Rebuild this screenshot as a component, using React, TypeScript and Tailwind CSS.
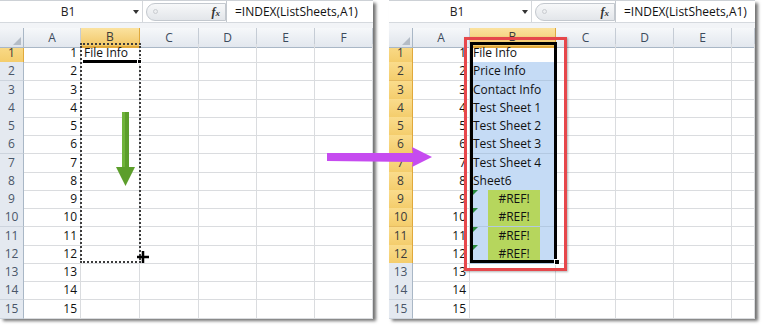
import React from 'react';

type Cell = { text?: string; kind?: 'plain' | 'active' | 'sel' | 'ref' };

interface PanelProps {
  cols: string;
  letters: string[];
  selectedRows: number;
  bCells: Cell[];
  children?: React.ReactNode;
}

const rows = Array.from({ length: 15 }, (_, i) => i + 1);

function FormulaBar() {
  return (
    <div className="h-[22px] flex items-stretch border-t border-[#cdd1d6] bg-white">
      <div className="w-[143px] flex items-center border-r border-[#d4d7db]">
        <span className="flex-1 text-center text-[12px] text-[#222] pl-[3px]">B1</span>
        <span className="w-0 h-0 border-l-[3px] border-r-[3px] border-t-[4px] border-l-transparent border-r-transparent border-t-[#333] mr-[3px]" />
      </div>
      <div className="w-[80px] self-center h-[18px] ml-[3px] rounded-l-full border border-[#c3c8ce] bg-gradient-to-b from-[#f7f8f9] to-[#e3e6ea] flex items-center justify-between pl-[6px] pr-[5px]">
        <span className="w-[5px] h-[5px] rounded-full border border-[#c9ccd0] bg-[#eceef0]" />
        <span className="font-['Liberation_Serif',serif] italic font-bold text-[12px] text-[#333] leading-none">
          f<span className="text-[9px]">x</span>
        </span>
      </div>
      <div className="flex-1 flex items-center border-l border-[#c3c8ce] pl-[8px] text-[12px] text-[#111] whitespace-nowrap overflow-hidden">
        =INDEX(ListSheets,A1)
      </div>
    </div>
  );
}

function Panel({ cols, letters, selectedRows, bCells, children }: PanelProps) {
  return (
    <div className="relative bg-white shadow-[3px_3px_3px_rgba(0,0,0,0.55)]">
      <FormulaBar />
      <div className="h-[6px] bg-[#f2f4f7] border-t border-[#d5d9de]" />
      <div className={`grid ${cols} h-[16px]`}>
        <div className="relative bg-gradient-to-b from-[#f3f5f8] to-[#dfe4eb] border-r border-b border-[#a9b7c6]">
          <svg className="absolute right-[2px] bottom-[2px]" width="8" height="8" viewBox="0 0 8 8">
            <polygon points="8,0 8,8 0,8" fill="#b4bcc6" />
          </svg>
        </div>
        {letters.map((l, i) => (
          <div
            key={i}
            className={
              l === 'B'
                ? 'flex items-center justify-center text-[12px] text-[#3a3a3a] bg-gradient-to-b from-[#fbe29f] to-[#f1c766] border-r border-b-2 border-[#e0a93c]'
                : 'flex items-center justify-center text-[12px] text-[#3c4a5c] bg-gradient-to-b from-[#f6f8fa] to-[#e2e7ee] border-r border-b border-r-[#c5ccd5] border-b-[#a9b7c6]'
            }
          >
            {l}
          </div>
        ))}
      </div>
      {rows.map((r) => {
        const b = bCells[r - 1] || {};
        const sel = r <= selectedRows;
        return (
          <div key={r} className={`grid ${cols} h-[18.25px]`}>
            <div
              className={
                sel
                  ? 'flex items-center justify-center text-[12px] text-[#3a3a3a] bg-gradient-to-b from-[#fadc8c] to-[#f4cd6c] border-r border-b border-r-[#e0a93c] border-b-[#e5bb62]'
                  : 'flex items-center justify-center text-[12px] text-[#4a5668] bg-[#e4e9f0] border-r border-b border-r-[#a9b7c6] border-b-[#cdd4dd]'
              }
            >
              {r}
            </div>
            <div className="flex items-center justify-end pr-[3px] text-[12px] text-[#111] border-r border-b border-[#dadcdf]">{r}</div>
            <div
              className={`relative flex items-center text-[12px] text-[#111] border-r border-b whitespace-nowrap ${
                b.kind === 'sel' || b.kind === 'ref' ? 'bg-[#c5dbf5] border-[#b3c9e2]' : 'border-[#dadcdf]'
              }`}
            >
              {b.kind === 'ref' ? (
                <>
                  <span className="absolute left-[3px] top-0 w-0 h-0 border-t-[5px] border-r-[5px] border-t-[#2a8a3e] border-r-transparent" />
                  <span className="ml-[18px] w-[52px] h-full bg-[#b6d65d] flex items-center justify-center">{b.text}</span>
                </>
              ) : (
                <span className="pl-[3px]">{b.text}</span>
              )}
            </div>
            {letters.slice(2).map((l, i) => (
              <div key={i} className="border-r border-b border-[#dadcdf]" />
            ))}
          </div>
        );
      })}
      {children}
    </div>
  );
}

export default function App() {
  const leftB: Cell[] = [{ text: 'File Info', kind: 'active' }];
  const names = ['File Info', 'Price Info', 'Contact Info', 'Test Sheet 1', 'Test Sheet 2', 'Test Sheet 3', 'Test Sheet 4', 'Sheet6'];
  const rightB: Cell[] = [
    ...names.map((t, i) => ({ text: t, kind: (i === 0 ? 'active' : 'sel') as Cell['kind'] })),
    ...[0, 1, 2, 3].map(() => ({ text: '#REF!', kind: 'ref' as const })),
  ];

  return (
    <div className="relative w-[768px] h-[332px] bg-white overflow-hidden font-['Open_Sans','Liberation_Sans',sans-serif]">
      <div className="flex items-start">
        <div className="w-[373px]">
          <Panel
            cols="grid-cols-[24px_57px_59px_59px_58px_58px_58px]"
            letters={['A', 'B', 'C', 'D', 'E', 'F']}
            selectedRows={1}
            bCells={leftB}
          >
            <div className="absolute left-[80px] top-[43px] w-[61px] h-[220px] border-2 border-dotted border-[#3c3c3c]" />
            <div className="absolute left-[83px] top-[60px] w-[56px] h-[3px] bg-black" />
            <div className="absolute left-[137px] top-[59px] w-[5px] h-[5px] bg-black border border-white" />
            <svg className="absolute left-[137px] top-[251px]" width="12" height="12" viewBox="0 0 12 12">
              <path d="M6 0v12M0 6h12" stroke="#000" strokeWidth="2.5" />
            </svg>
            <svg className="absolute left-[114px] top-[110px]" width="24" height="80" viewBox="0 0 24 80">
              <polygon points="8,2 15,2 15,57 21,57 11.5,76 2,57 8,57" fill="#5c9e2b" />
              <polygon points="8,2 11,2 11,57 8,57" fill="#6fb33a" />
            </svg>
          </Panel>
        </div>
        <div className="w-[366px] ml-[16px]">
          <Panel
            cols="grid-cols-[24px_57px_86px_60px_58px_58px_23px]"
            letters={['A', 'B', 'C', 'D', 'E', '']}
            selectedRows={12}
            bCells={rightB}
          >
            <div className="absolute left-[75px] top-[37px] w-[103px] h-[234px] border-[3px] border-[#e6474b] shadow-[1px_1px_2px_rgba(0,0,0,0.3)]" />
            <div className="absolute left-[81px] top-[42px] w-[87px] h-[221px] border-[3px] border-black" />
            <div className="absolute left-[165px] top-[259px] w-[6px] h-[6px] bg-black border border-white" />
          </Panel>
        </div>
      </div>
      <svg className="absolute left-[326px] top-[146px]" width="108" height="22" viewBox="0 0 108 22">
        <polygon points="1,7 87,7 86,1 106,11 86,21 87,16 1,15" fill="#c64bf0" />
      </svg>
    </div>
  );
}
